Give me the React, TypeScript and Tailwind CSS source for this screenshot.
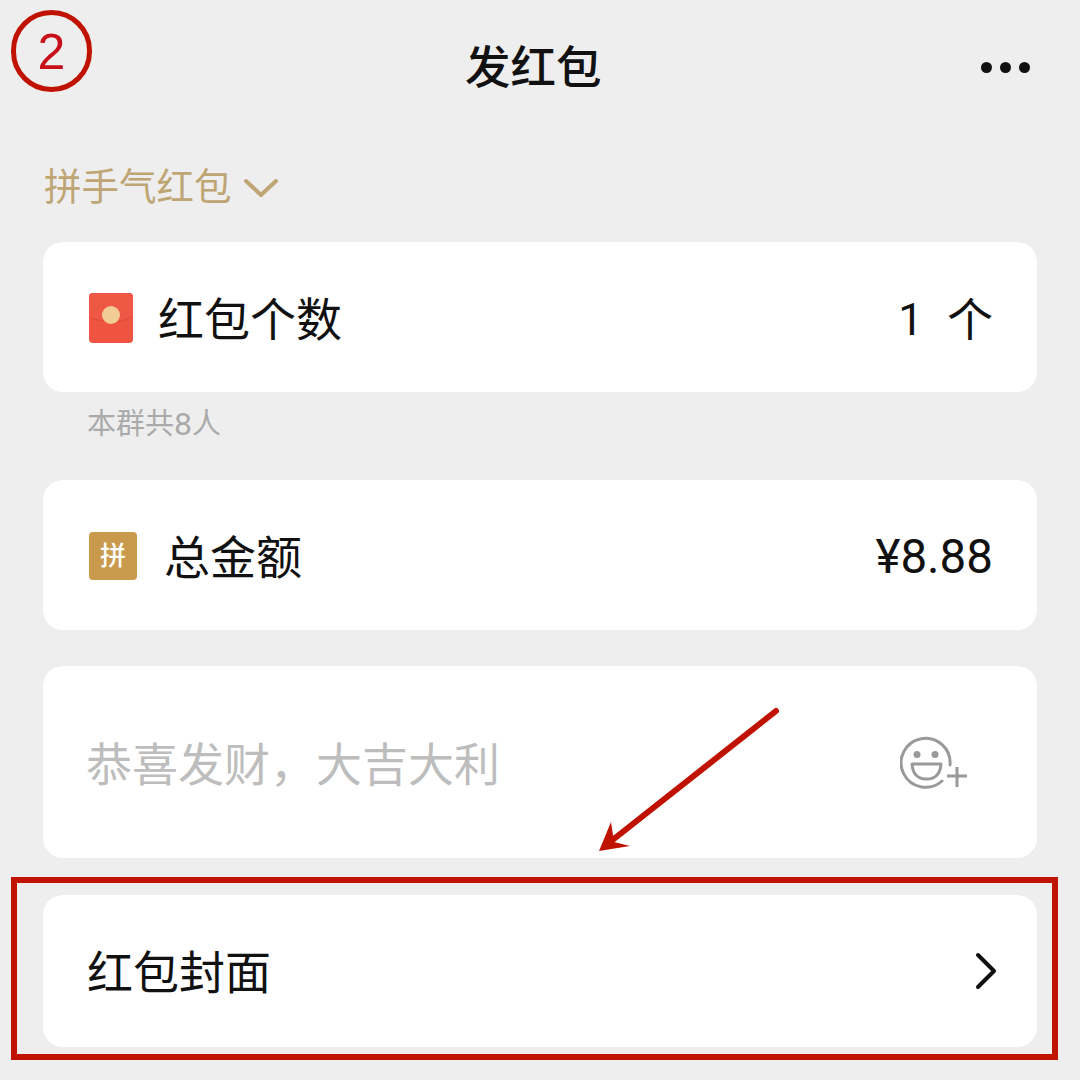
const FONT = "font-['Roboto','Noto_Sans_CJK_SC',sans-serif]";

function RedPacketIcon() {
  return (
    <svg width="44" height="50" viewBox="0 0 44 50" className="shrink-0">
      <rect width="44" height="50" rx="4" fill="#ef5440" />
      <path d="M0 4a4 4 0 0 1 4-4h36a4 4 0 0 1 4 4v20q-22 10-44 0z" fill="#ee5845" />
      <path d="M0 24q22 10 44 0" fill="none" stroke="#dd4a38" strokeWidth="1.500" opacity="0.6" />
      <circle cx="22" cy="22" r="9" fill="#f0cd95" />
    </svg>
  );
}

function SmileyPlusIcon() {
  return (
    <svg width="72" height="56" viewBox="0 0 72 56" fill="none" stroke="#999999" strokeWidth="3" className="shrink-0">
      <path d="M42 46A24.500 24.500 0 1 1 50 30" strokeLinecap="round" />
      <circle cx="17" cy="19.500" r="3.500" fill="#999999" stroke="none" />
      <circle cx="35" cy="19.500" r="3.500" fill="#999999" stroke="none" />
      <path d="M12 29h29q-1 15-14.500 15T12 29z" strokeLinejoin="round" />
      <path d="M47 41h20M57 32v20" />
    </svg>
  );
}

function Card({ className, children }: { className: string; children: React.ReactNode }) {
  return (
    <div className={`mx-[43px] flex items-center rounded-[20px] bg-white ${className}`}>
      {children}
    </div>
  );
}

export default function App() {
  return (
    <div className={`relative h-[1080px] w-[1080px] overflow-hidden bg-[#eeeeee] text-[46px] text-[#111111] ${FONT}`}>
      <header className="flex h-[134px] items-center justify-between pl-[465px] pr-[50px]">
        <h1 className="mt-[3px] text-[45.500px] font-medium leading-none">发红包</h1>
        <div className="flex gap-[8px]">
          <span className="h-[11px] w-[11px] rounded-full bg-[#111111]" />
          <span className="h-[11px] w-[11px] rounded-full bg-[#111111]" />
          <span className="h-[11px] w-[11px] rounded-full bg-[#111111]" />
        </div>
      </header>

      <div className="flex h-[108px] items-center gap-[12px] pl-[44px] text-[37.500px] leading-none text-[#bfa574]">
        <span>拼手气红包</span>
        <svg width="34" height="20" viewBox="0 0 34 20" fill="none" stroke="#bfa574" strokeWidth="4" strokeLinecap="round" strokeLinejoin="round">
          <path d="M2 3l15 14L32 3" />
        </svg>
      </div>

      <Card className="h-[150px] pl-[46px] pr-[44px]">
        <div className="mt-[1px]">
          <RedPacketIcon />
        </div>
        <span className="ml-[25px] mt-[5px] leading-none">红包个数</span>
        <span className="ml-auto mt-[5px] flex items-center gap-[24px] leading-none">
          <span className="text-[44px]">1</span>
          <span>个</span>
        </span>
      </Card>

      <p className="ml-[87px] flex h-[88px] items-start pt-[14px] text-[29px] leading-[36px] text-[#aaaaaa]">
        本群共<span className="text-[32px]">8</span>人
      </p>

      <Card className="h-[150px] pl-[46px] pr-[44px]">
        <div className="mt-[1px] flex h-[48px] w-[48px] shrink-0 items-center justify-center rounded-[4px] bg-[#c99a4c] text-[26px] font-medium leading-none text-white">拼</div>
        <span className="ml-[27px] mt-[5px] leading-none">总金额</span>
        <span className="ml-auto mt-[5px] text-[47.500px] leading-none">¥8.88</span>
      </Card>

      <Card className="mt-[36px] h-[192px] pl-[43px] pr-[65px]">
        <span className="mt-[5px] text-[46px] leading-none text-[#bdbdbd]">恭喜发财，大吉大利</span>
        <div className="ml-auto mt-[2px]">
          <SmileyPlusIcon />
        </div>
      </Card>

      <Card className="mt-[37px] h-[152px] pl-[44px] pr-[40px]">
        <span className="mt-[3px] leading-none">红包封面</span>
        <svg width="22" height="38" viewBox="0 0 22 38" fill="none" stroke="#111111" strokeWidth="4" strokeLinecap="round" strokeLinejoin="round" className="ml-auto">
          <path d="M3 3l16 16L3 35" />
        </svg>
      </Card>

      {/* annotations drawn over the screenshot */}
      <div className="absolute left-[11px] top-[10px] flex h-[82px] w-[81px] items-center justify-center rounded-full border-[5px] border-[#c01200] pt-[2px] font-['Liberation_Sans',sans-serif] text-[50px] leading-none text-[#c8101a]">2</div>

      <svg width="200" height="160" viewBox="0 0 200 160" className="absolute left-[590px] top-[700px]">
        <path d="M186 11L20 142" stroke="#c01200" strokeWidth="6" strokeLinecap="round" />
        <path d="M9 151L21 122L24 142L40 146Z" fill="#c01200" />
      </svg>

      <div className="absolute left-[11px] top-[877px] h-[183px] w-[1047px] border-[6px] border-[#c01200]" />
    </div>
  );
}
